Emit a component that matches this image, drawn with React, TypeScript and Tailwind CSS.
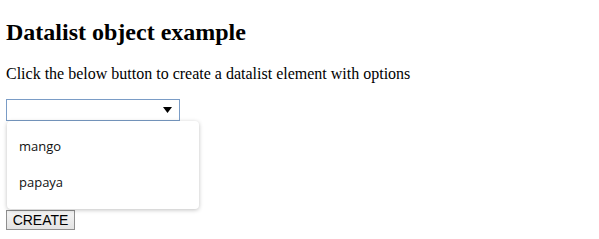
import React from "react";

export default function App() {
  return (
    <div className="relative min-h-[239px] bg-white px-[6px] text-black">
      <div className="pt-[18px] font-['Liberation_Serif',serif]">
        <h2 className="text-[24px] font-bold leading-[28px]">Datalist object example</h2>
        <p className="mt-[19px] text-[16px] leading-[18px]">
          Click the below button to create a datalist element with options
        </p>
      </div>
      <div className="relative mt-[16px] w-[174px]">
        <div className="flex h-[22px] w-[174px] items-center justify-end border border-[#7a9cc6] bg-white pr-[7px]">
          <svg width="9" height="6" viewBox="0 0 9 6">
            <polygon points="0,0 9,0 4.5,6" fill="#000" />
          </svg>
        </div>
        <div className="absolute left-[1px] top-[22px] z-10 w-[192px] rounded-[4px] bg-white py-[8px] font-['Open_Sans',sans-serif] text-[13px] text-[#111] shadow-[0_1px_4px_rgba(0,0,0,0.25)]">
          <div className="flex h-[36px] items-center pl-[12px]">mango</div>
          <div className="flex h-[36px] items-center pl-[12px]">papaya</div>
        </div>
      </div>
      <div className="h-[89px]" />
      <button className="block h-[20px] w-[69px] border border-[#8f8f8f] bg-gradient-to-b from-[#f5f5f5] to-[#e3e3e3] font-['Liberation_Sans',sans-serif] text-[14px] leading-[16px] text-black">
        CREATE
      </button>
    </div>
  );
}
